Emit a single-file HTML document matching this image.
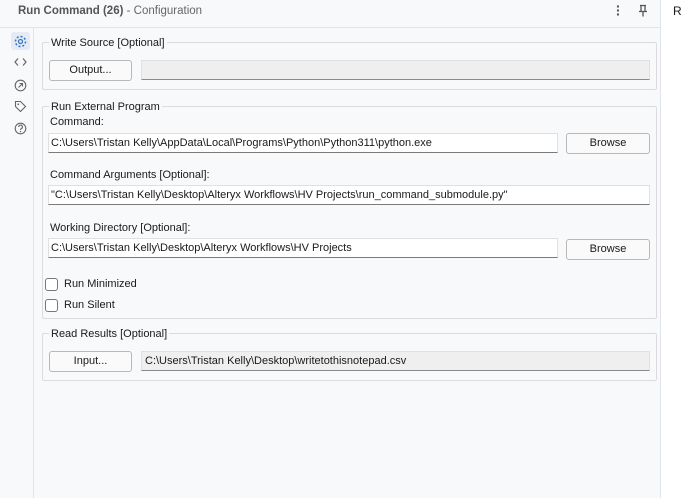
<!DOCTYPE html><html><head><style>
*{margin:0;padding:0;box-sizing:border-box}
body{width:682px;height:498px;background:#fff;font-family:"Liberation Sans",Arial,sans-serif;font-size:11px;color:#1a1a1a;position:relative;overflow:hidden}
.a{position:absolute}
.panel{left:0;top:0;width:661px;height:498px;background:#f8f9fb;border-right:1px solid #e1e4e8}
.hdr{left:0;top:0;width:660px;height:28px;border-bottom:1px solid #e1e4e8}
.side{left:33px;top:28px;width:1px;height:470px;background:#e1e4e8}
.grp{border:1px solid #dcdcdc;border-radius:2px}
.lg{background:#f8f9fb;padding:0 2px;line-height:14px}
.btn{border:1px solid #b8b8b8;border-radius:3px;background:#fafafa;text-align:center;line-height:19px}
.tb{background:#fff;border:1px solid #e0e0e0;border-bottom:1px solid #7a7a7a;line-height:18px;padding-left:2px;white-space:nowrap;overflow:hidden}
.ro{background:#efefef;border:1px solid #e0e0e0;border-bottom:1px solid #8a8a8a;line-height:18px;padding-left:3px}
.cb{width:13px;height:13px;border:1px solid #777;border-radius:3px;background:#fff}
</style></head><body>
<div class="a panel"></div>
<div class="a hdr"></div>
<div class="a" style="left:18px;top:5px;font-size:11.5px;color:#555;font-weight:bold">Run Command (26) <span style="font-weight:normal;color:#666">- Configuration</span></div>
<div class="a" style="left:616px;top:4px;color:#555;font-weight:bold;line-height:4px;font-size:14px">·<br>·<br>·</div>
<svg class="a" style="left:636px;top:4px" width="14" height="14" viewBox="0 0 14 14"><path d="M4 1.5h6M5 1.5v6M9 1.5v6M3 7.5h8M7 7.5v5" stroke="#555" stroke-width="1.3" fill="none"/></svg>
<div class="a" style="left:673px;top:4px;font-size:12px">R</div>
<div class="a side"></div>
<div class="a" style="left:11px;top:32px;width:19px;height:18px;background:#e4ebf5;border-radius:3px"></div>
<svg class="a" style="left:13px;top:34px" width="15" height="15" viewBox="0 0 15 15"><circle cx="7.5" cy="7.5" r="2" fill="none" stroke="#3b78c4" stroke-width="1.3"/><circle cx="7.5" cy="7.5" r="5" fill="none" stroke="#3b78c4" stroke-width="1.6" stroke-dasharray="2 1.9"/></svg>
<svg class="a" style="left:14px;top:57px" width="13" height="10" viewBox="0 0 13 10"><path d="M4 1.5L1 5l3 3.5M9 1.5L12 5l-3 3.5" stroke="#666" stroke-width="1.2" fill="none"/></svg>
<svg class="a" style="left:14px;top:79px" width="13" height="13" viewBox="0 0 13 13"><circle cx="6.5" cy="6.5" r="5.3" stroke="#666" stroke-width="1.1" fill="none"/><path d="M4.5 8.5l4-4M5.5 4.5h3v3" stroke="#666" stroke-width="1.1" fill="none"/></svg>
<svg class="a" style="left:14px;top:100px" width="13" height="13" viewBox="0 0 13 13"><path d="M1.5 1.5h5l5 5-5 5-5-5z" stroke="#666" stroke-width="1.1" fill="none"/><circle cx="4.3" cy="4.3" r="0.9" fill="#666"/></svg>
<svg class="a" style="left:14px;top:122px" width="13" height="13" viewBox="0 0 13 13"><circle cx="6.5" cy="6.5" r="5.3" stroke="#666" stroke-width="1.1" fill="none"/><path d="M4.8 5a1.8 1.8 0 1 1 2.4 1.6c-.6.3-.7.6-.7 1.3" stroke="#666" stroke-width="1.1" fill="none"/><circle cx="6.5" cy="9.6" r=".7" fill="#666"/></svg>

<div class="a grp" style="left:42px;top:42px;width:615px;height:48px"></div>
<div class="a lg" style="left:49px;top:36px">Write Source [Optional]</div>
<div class="a btn" style="left:49px;top:60px;width:83px;height:21px">Output...</div>
<div class="a ro" style="left:141px;top:60px;width:509px;height:20px"></div>

<div class="a grp" style="left:42px;top:106px;width:615px;height:213px"></div>
<div class="a lg" style="left:49px;top:100px">Run External Program</div>
<div class="a" style="left:50px;top:116px">Command:</div>
<div class="a tb" style="left:48px;top:133px;width:510px;height:20px">C:\Users\Tristan Kelly\AppData\Local\Programs\Python\Python311\python.exe</div>
<div class="a btn" style="left:566px;top:133px;width:84px;height:21px">Browse</div>
<div class="a" style="left:50px;top:169px">Command Arguments [Optional]:</div>
<div class="a tb" style="left:48px;top:185px;width:602px;height:20px">"C:\Users\Tristan Kelly\Desktop\Alteryx Workflows\HV Projects\run_command_submodule.py"</div>
<div class="a" style="left:50px;top:222px">Working Directory [Optional]:</div>
<div class="a tb" style="left:48px;top:238px;width:510px;height:20px">C:\Users\Tristan Kelly\Desktop\Alteryx Workflows\HV Projects</div>
<div class="a btn" style="left:566px;top:239px;width:84px;height:21px">Browse</div>
<div class="a cb" style="left:45px;top:278px"></div>
<div class="a" style="left:64px;top:278px">Run Minimized</div>
<div class="a cb" style="left:45px;top:299px"></div>
<div class="a" style="left:64px;top:299px">Run Silent</div>

<div class="a grp" style="left:42px;top:333px;width:615px;height:48px"></div>
<div class="a lg" style="left:49px;top:327px">Read Results [Optional]</div>
<div class="a btn" style="left:49px;top:351px;width:83px;height:21px">Input...</div>
<div class="a ro" style="left:141px;top:351px;width:509px;height:20px">C:\Users\Tristan Kelly\Desktop\writetothisnotepad.csv</div>
</body></html>
